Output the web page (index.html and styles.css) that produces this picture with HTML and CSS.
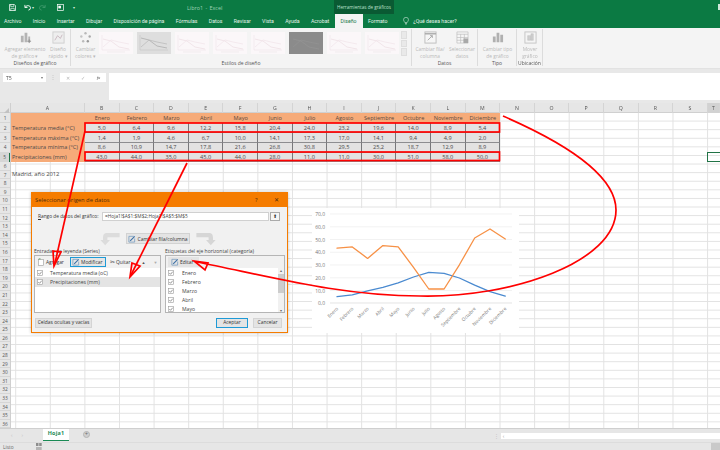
FILE: index.html
```html
<!DOCTYPE html>
<html lang="es">
<head>
<meta charset="utf-8">
<title>Libro1 - Excel</title>
<link rel="stylesheet" href="styles.css">
</head>
<body>
<svg class="defs" width="0" height="0" aria-hidden="true">
  <symbol id="thumb" viewBox="0 0 34 22">
    <path d="M3 3V18H31" fill="none" stroke="#eadfe4" stroke-width=".5"/>
    <path d="M4 7L12 9L20 15L30 17" fill="none" stroke="#eddce3" stroke-width=".7"/>
    <path d="M4 15L12 8L20 10L30 12" fill="none" stroke="#f0e4e9" stroke-width=".7"/>
    <path d="M8 20H26" stroke="#eee6ea" stroke-width=".7"/>
  </symbol>
  <symbol id="thumbg" viewBox="0 0 34 22">
    <path d="M3 3V18H31" fill="none" stroke="#bcbcbc" stroke-width=".5"/>
    <path d="M4 6L12 8L20 14L30 16" fill="none" stroke="#a8a8a8" stroke-width=".7"/>
    <path d="M4 15L12 8L20 10L30 12" fill="none" stroke="#b8b8b8" stroke-width=".7"/>
  </symbol>
  <symbol id="thumbd" viewBox="0 0 34 22">
    <path d="M4 7L12 9L20 15L30 17" fill="none" stroke="#959595" stroke-width=".7"/>
    <path d="M4 15L12 8L20 10L30 12" fill="none" stroke="#939393" stroke-width=".7"/>
  </symbol>
  <symbol id="pen" viewBox="0 0 9 9">
    <path d="M1 1.500H6.500M1 1.500V8H7.500V4" fill="none" stroke="#6d95bd" stroke-width=".8"/>
    <path d="M2.500 6.500L7.500 1.500" stroke="#3a6ea5" stroke-width="1.200"/>
  </symbol>
  <symbol id="chk" viewBox="0 0 7 7">
    <rect x=".5" y=".5" width="6" height="6" fill="#fff" stroke="#9a9a9a" stroke-width=".7"/>
    <path d="M1.500 3.500L3 5L5.500 2" fill="none" stroke="#666" stroke-width=".8"/>
  </symbol>
</svg>
<div class="page">
  <header class="titlebar">
    <div class="qat">
      <svg class="qat-ico" viewBox="0 0 8 8"><path d="M.5 .5H6L7.500 2V7.500H.5Z" fill="none" stroke="#fff" stroke-width=".9"/><path d="M2 .5V3H5.500V.5M2 7.500V5H6V7.500" fill="none" stroke="#fff" stroke-width=".7"/></svg>
      <svg class="qat-ico undo" viewBox="0 0 8 8"><path d="M1 1V4H4M1.500 4A3 2.600 0 1 1 5 7" fill="none" stroke="#fff" stroke-width="1"/></svg>
      <span class="qat-caret">▾</span>
      <svg class="qat-ico redo" viewBox="0 0 8 8"><path d="M7 1V4H4M6.500 4A3 2.600 0 1 0 3 7" fill="none" stroke="#3f9a6d" stroke-width="1"/></svg>
      <svg class="qat-ico form" viewBox="0 0 8 8"><rect x=".5" y=".5" width="7" height="7" fill="none" stroke="#fff" stroke-width=".8"/><rect x="1.500" y="2" width="3" height="3" fill="#fff"/></svg>
      <span class="qat-caret">▾</span>
    </div>
    <div class="doc-title">Libro1 - Excel</div>
    <div class="tool-tab">Herramientas de gráficos</div>
    <div class="win-btn"></div>
  </header>
  <nav class="tabs">
    <span class="tab">Archivo</span><span class="tab">Inicio</span><span class="tab">Insertar</span><span class="tab">Dibujar</span><span class="tab">Disposición de página</span><span class="tab">Fórmulas</span><span class="tab">Datos</span><span class="tab">Revisar</span><span class="tab">Vista</span><span class="tab">Ayuda</span><span class="tab">Acrobat</span><span class="tab tab-on">Diseño</span><span class="tab">Formato</span>
    <svg class="bulb" viewBox="0 0 6 8"><path d="M1.800 5.500C1.500 4.500 .5 4 .5 2.800A2.500 2.500 0 0 1 5.500 2.800C5.500 4 4.500 4.500 4.200 5.500ZM2 6.500H4M2.500 7.500H3.500" fill="none" stroke="#cfe8da" stroke-width=".6"/></svg>
    <span class="tell">¿Qué desea hacer?</span>
  </nav>
  <section class="ribbon">
    <div class="group g-design">
      <div class="cmds">
        <div class="cmd w-add"><svg class="ric" viewBox="0 0 14 14"><path d="M2 12V5H5V12ZM6 12V2H9V12ZM10 12V6H12V12Z" fill="#b4b4b4"/><path d="M11 9V13M9 11H13" stroke="#8f8f8f"/></svg><span>Agregar elemento<br>de gráfico ▾</span></div>
        <div class="cmd w-quick"><svg class="ric" viewBox="0 0 14 14"><rect x="1" y="1" width="12" height="12" fill="#eee" stroke="#cfcfcf"/><path d="M3 10L6 5L9 8L11 4" fill="none" stroke="#c9b8bf"/></svg><span>Diseño<br>rápido ▾</span></div>
      </div>
      <div class="glabel">Diseños de gráfico</div>
    </div>
    <div class="group g-style">
      <div class="cmds">
        <div class="cmd w-color"><svg class="ric" viewBox="0 0 14 14"><circle cx="7" cy="2.500" r="1.300" fill="#b9b9b9"/><circle cx="2.500" cy="6" r="1.300" fill="#c4c4c4"/><circle cx="11.500" cy="6" r="1.300" fill="#a9a9a9"/><circle cx="4.500" cy="11" r="1.300" fill="#bbb"/><circle cx="9.500" cy="11" r="1.300" fill="#999"/></svg><span>Cambiar<br>colores ▾</span></div>
        <div class="gallery">
          <svg class="thumb"><use href="#thumb"/></svg>
          <svg class="thumb t-grey"><use href="#thumbg"/></svg>
          <svg class="thumb"><use href="#thumb"/></svg>
          <svg class="thumb"><use href="#thumb"/></svg>
          <svg class="thumb"><use href="#thumb"/></svg>
          <svg class="thumb t-dark"><use href="#thumbd"/></svg>
          <svg class="thumb"><use href="#thumb"/></svg>
          <svg class="thumb"><use href="#thumb"/></svg>
          <div class="gal-scroll"><i></i><i></i><i></i></div>
        </div>
      </div>
      <div class="glabel">Estilos de diseño</div>
    </div>
    <div class="group g-data">
      <div class="cmds">
        <div class="cmd w-data"><svg class="ric" viewBox="0 0 14 14"><rect x="1" y="1" width="12" height="12" fill="#f6f6f6" stroke="#bdbdbd"/><path d="M1 3H13" stroke="#a9a9a9" stroke-width="1.500"/><path d="M4 10L9 5M9 5H6.500M9 5V7.500" fill="none" stroke="#a9a9a9"/></svg><span>Cambiar fila/<br>columna</span></div>
        <div class="cmd w-data"><svg class="ric" viewBox="0 0 14 14"><path d="M1 1H13V13H1ZM1 3.500H13M5 3.500V13M9 3.500V13M1 7H13M1 10H13" fill="#f6f6f6" stroke="#bdbdbd" stroke-width=".7"/><rect x="8" y="8" width="5" height="5" fill="#a9a9a9"/></svg><span>Seleccionar<br>datos</span></div>
      </div>
      <div class="glabel">Datos</div>
    </div>
    <div class="group g-type">
      <div class="cmds">
        <div class="cmd w-type"><svg class="ric" viewBox="0 0 14 14"><path d="M2 12V6H5V12ZM6 12V2H9V12ZM10 12V4H13V12Z" fill="#b0b0b0"/></svg><span>Cambiar tipo<br>de gráfico</span></div>
      </div>
      <div class="glabel">Tipo</div>
    </div>
    <div class="group g-move">
      <div class="cmds">
        <div class="cmd w-move"><svg class="ric" viewBox="0 0 14 14"><rect x="1" y="1" width="12" height="12" fill="#f4f4f4" stroke="#c4c4c4"/><path d="M4 10V5H7V10ZM7.500 10V3H10V10Z" fill="#cfcfcf" stroke="#b9b9b9" stroke-width=".5"/></svg><span>Mover<br>gráfico</span></div>
      </div>
      <div class="glabel">Ubicación</div>
    </div>
  </section>
  <section class="formula">
    <div class="namebox"><span>T5</span><span class="nb-caret">▾</span></div>
    <div class="f-dots">⋮</div>
    <div class="fx-box"><span>✕</span><span>✓</span><em>fx</em></div>
    <div class="f-input"></div>
  </section>
  <div class="colheads">
    <div class="corner"></div>
    <div class="ch">A</div><div class="ch">B</div><div class="ch">C</div><div class="ch">D</div><div class="ch">E</div><div class="ch">F</div><div class="ch">G</div><div class="ch">H</div><div class="ch">I</div><div class="ch">J</div><div class="ch">K</div><div class="ch">L</div><div class="ch">M</div><div class="ch">N</div><div class="ch">O</div><div class="ch">P</div><div class="ch">Q</div><div class="ch">R</div><div class="ch">S</div><div class="ch ch-on">T</div>
  </div>
  <div class="sheet">
    <div class="rownums">
      <div class="rn rn-t">1</div><div class="rn rn-t">2</div><div class="rn rn-t">3</div><div class="rn rn-s">4</div><div class="rn rn-s rn-on">5</div>
      <div class="rn">6</div><div class="rn">7</div><div class="rn">8</div><div class="rn">9</div><div class="rn">10</div><div class="rn">11</div><div class="rn">12</div><div class="rn">13</div><div class="rn">14</div><div class="rn">15</div><div class="rn">16</div><div class="rn">17</div><div class="rn">18</div><div class="rn">19</div><div class="rn">20</div><div class="rn">21</div><div class="rn">22</div><div class="rn">23</div><div class="rn">24</div><div class="rn">25</div><div class="rn">26</div><div class="rn">27</div><div class="rn">28</div><div class="rn">29</div><div class="rn">30</div><div class="rn">31</div><div class="rn">32</div><div class="rn">33</div><div class="rn">34</div><div class="rn">35</div><div class="rn">36</div>
    </div>
    <div class="cells">
      <div class="data">
        <div class="c lab r1"></div><div class="c head r1">Enero</div><div class="c head r1">Febrero</div><div class="c head r1">Marzo</div><div class="c head r1">Abril</div><div class="c head r1">Mayo</div><div class="c head r1">Junio</div><div class="c head r1">Julio</div><div class="c head r1">Agosto</div><div class="c head r1">Septiembre</div><div class="c head r1">Octubre</div><div class="c head r1">Noviembre</div><div class="c head r1">Diciembre</div>
        <div class="c lab r1">Temperatura media (°C)</div><div class="c num r1">5,0</div><div class="c num r1">6,4</div><div class="c num r1">9,6</div><div class="c num r1">12,2</div><div class="c num r1">15,8</div><div class="c num r1">20,4</div><div class="c num r1">24,0</div><div class="c num r1">23,2</div><div class="c num r1">19,6</div><div class="c num r1">14,0</div><div class="c num r1">8,9</div><div class="c num r1">5,4</div>
        <div class="c lab r1">Temperatura máxima (°C)</div><div class="c num r1">1,4</div><div class="c num r1">1,9</div><div class="c num r1">4,6</div><div class="c num r1">6,7</div><div class="c num r1">10,0</div><div class="c num r1">14,1</div><div class="c num r1">17,3</div><div class="c num r1">17,0</div><div class="c num r1">14,1</div><div class="c num r1">9,4</div><div class="c num r1">4,9</div><div class="c num r1">2,0</div>
        <div class="c lab r2">Temperatura mínima (°C)</div><div class="c num r2">8,6</div><div class="c num r2">10,9</div><div class="c num r2">14,7</div><div class="c num r2">17,8</div><div class="c num r2">21,6</div><div class="c num r2">26,8</div><div class="c num r2">30,8</div><div class="c num r2">29,5</div><div class="c num r2">25,2</div><div class="c num r2">18,7</div><div class="c num r2">12,9</div><div class="c num r2">8,9</div>
        <div class="c lab r2">Precipitaciones (mm)</div><div class="c num r2">43,0</div><div class="c num r2">44,0</div><div class="c num r2">35,0</div><div class="c num r2">45,0</div><div class="c num r2">44,0</div><div class="c num r2">28,0</div><div class="c num r2">11,0</div><div class="c num r2">11,0</div><div class="c num r2">30,0</div><div class="c num r2">51,0</div><div class="c num r2">58,0</div><div class="c num r2">50,0</div>
      </div>
      <div class="note">Madrid, año 2012</div>
      <div class="active-cell"></div>
    </div>
  </div>
  <footer class="sheetbar">
    <div class="nav-dots"><span>‹</span><span>›</span></div>
    <div class="sheet-tab">Hoja1</div>
    <div class="add-sheet">+</div>
    <div class="hs-wrap"><span class="hs-dots">⋮</span><span class="hs-left">‹</span><div class="hs-track"></div></div>
  </footer>
  <div class="statusbar">
    <span class="ready">Listo</span>
    <svg class="macro" viewBox="0 0 6 7"><rect x="0" y="0" width="2.500" height="3" fill="#8d8d8d"/><rect x="3.200" y="0" width="2.500" height="3" fill="#8d8d8d"/><rect x="0" y="4" width="5.700" height="3" fill="#b5b5b5"/></svg>
    <div class="sb-end"></div>
  </div>

  <aside class="chart">
    <svg class="chart-svg" viewBox="312 208 207 125">
      <g class="gl">
        <path d="M330 214H512M330 226.800H512M330 239.500H512M330 252.300H512M330 265H512M330 277.800H512M330 290.500H512"/>
        <path class="gl0" d="M330 303H512"/>
      </g>
      <g class="yl">
        <text x="325" y="216">70,0</text><text x="325" y="228.800">60,0</text><text x="325" y="241.500">50,0</text><text x="325" y="254.300">40,0</text><text x="325" y="267">30,0</text><text x="325" y="279.800">20,0</text><text x="325" y="292.500">10,0</text><text x="325" y="305">0,0</text>
      </g>
      <polyline class="s-blue" points="337,296.600 352.300,294.800 367.600,290.800 382.900,287.400 398.200,282.900 413.500,277 428.800,272.400 444.100,273.400 459.400,278 474.700,285.200 490,291.700 505.300,296.100"/>
      <polyline class="s-orange" points="337,248.200 352.300,246.900 367.600,258.400 382.900,245.600 398.200,246.900 413.500,267.300 428.800,289 444.100,289 459.400,264.800 474.700,238 490,229 505.300,239"/>
      <g class="xl">
        <text transform="translate(338.500 309) rotate(-45)">Enero</text>
        <text transform="translate(353.800 309) rotate(-45)">Febrero</text>
        <text transform="translate(369.100 309) rotate(-45)">Marzo</text>
        <text transform="translate(384.400 309) rotate(-45)">Abril</text>
        <text transform="translate(399.700 309) rotate(-45)">Mayo</text>
        <text transform="translate(415 309) rotate(-45)">Junio</text>
        <text transform="translate(430.300 309) rotate(-45)">Julio</text>
        <text transform="translate(445.600 309) rotate(-45)">Agosto</text>
        <text transform="translate(460.900 309) rotate(-45)">Septiembre</text>
        <text transform="translate(476.200 309) rotate(-45)">Octubre</text>
        <text transform="translate(491.500 309) rotate(-45)">Noviembre</text>
        <text transform="translate(506.800 309) rotate(-45)">Diciembre</text>
      </g>
    </svg>
  </aside>

  <div class="dialog">
    <div class="dlg-title"><span class="dlg-name">Seleccionar origen de datos</span><span class="dlg-q">?</span><span class="dlg-x">✕</span></div>
    <div class="dlg-body">
      <div class="range-row">
        <span class="range-label"><u>R</u>ango de datos del gráfico:</span>
        <div class="range-input">=Hoja1!$A$1:$M$2;Hoja1!$A$5:$M$5</div>
        <div class="range-btn">⬆</div>
      </div>
      <div class="switch-row">
        <svg class="sw-arrow" viewBox="0 0 24 16"><path d="M23 1H9C5 1 4 3 4 7V9H1L6.500 15L12 9H9V7C9 6 9.500 6 10 6H23Z" fill="#dcdcdc"/></svg>
        <div class="sw-btn"><svg class="pen"><use href="#pen"/></svg>Cambiar fila/columna</div>
        <svg class="sw-arrow" viewBox="0 0 24 16"><path d="M1 1H15C19 1 20 3 20 7V9H23L17.500 15L12 9H15V7C15 6 14.500 6 14 6H1Z" fill="#d6d6d6"/></svg>
      </div>
      <div class="panes">
        <div class="pane p-left">
          <div class="pane-title">Entradas de leyenda (Series)</div>
          <div class="pane-box">
            <div class="pane-tools">
              <div class="tb tb-add"><svg class="pen" viewBox="0 0 9 9"><rect x="1.500" y="1.500" width="6" height="7" fill="#fff" stroke="#9a9a9a" stroke-width=".7"/><path d="M2 1H4" stroke="#5a9a5a"/></svg>Agregar</div>
              <div class="tb tb-mod"><svg class="pen"><use href="#pen"/></svg>Modificar</div>
              <div class="tb tb-del"><span class="cross">✂</span>Quitar</div>
              <span class="updown">▲</span><span class="updown dim">▼</span>
            </div>
            <div class="li"><svg class="chk"><use href="#chk"/></svg>Temperatura media (oC)</div>
            <div class="li li-on"><svg class="chk"><use href="#chk"/></svg>Precipitaciones (mm)</div>
          </div>
        </div>
        <div class="pane p-right">
          <div class="pane-title">Etiquetas del eje horizontal (categoría)</div>
          <div class="pane-box">
            <div class="pane-tools"><div class="tb tb-edit"><svg class="pen"><use href="#pen"/></svg>Editar</div></div>
            <div class="cat-wrap">
              <div class="cats">
                <div class="li cat"><svg class="chk"><use href="#chk"/></svg>Enero</div>
                <div class="li cat"><svg class="chk"><use href="#chk"/></svg>Febrero</div>
                <div class="li cat"><svg class="chk"><use href="#chk"/></svg>Marzo</div>
                <div class="li cat"><svg class="chk"><use href="#chk"/></svg>Abril</div>
                <div class="li cat"><svg class="chk"><use href="#chk"/></svg>Mayo</div>
              </div>
              <div class="vscroll"><span>▴</span><i></i><span>▾</span></div>
            </div>
          </div>
        </div>
      </div>
      <div class="dlg-foot">
        <div class="btn btn-hidden">Celdas ocultas y vacías</div>
        <div class="foot-right"><div class="btn btn-ok">Aceptar</div><div class="btn btn-cancel">Cancelar</div></div>
      </div>
    </div>
  </div>

  <svg class="marks" viewBox="0 0 720 450">
    <rect x="85" y="123" width="414.500" height="9"/>
    <rect x="85" y="152" width="414.500" height="8.500"/>
    <path d="M503 116C572 146 616 178 616 210C616 262 512 298 420 296C340 296 268 276 197 262"/>
    <path d="M194 261L208 263L205 270Z"/>
    <path d="M85 131L55 263"/>
    <path d="M53 251L61 252L54 266Z"/>
    <path d="M187 163L131 275"/>
    <path d="M132 263L140 266L130 277Z"/>
  </svg>
</div>
</body>
</html>
```

FILE: styles.css
```css
* { box-sizing: border-box; }
html, body { margin: 0; padding: 0; background: #fff; }
body { font-family: "Open Sans", "Liberation Sans", sans-serif; font-size: 5.600px; color: #444; }
.defs { position: absolute; }
.page { position: relative; width: 720px; height: 450px; overflow: hidden; display: flex; flex-direction: column; filter: blur(.3px); }

.titlebar { height: 14px; background: #0b7a43; display: flex; align-items: center; flex: none; }
.qat { width: 334px; flex: none; display: flex; align-items: center; padding-left: 9px; position: relative; }
.qat-ico { width: 7px; height: 7px; flex: none; }
.undo { margin-left: 8px; }
.qat-caret { color: #d6eade; font-size: 4px; margin-left: 1px; }
.redo { margin-left: 5px; }
.form { margin-left: 11px; }
.qat .qat-caret:last-child { margin-left: 9px; }
.doc-title { position: absolute; left: 187px; top: 4px; color: #9fd4b7; font-size: 5.400px; word-spacing: 1px; }
.tool-tab { width: 60px; height: 14px; background: #0a5a33; color: #bfe0cd; font-size: 4.600px; line-height: 14px; padding-left: 3px; white-space: nowrap; overflow: hidden; flex: none; }
.win-btn { width: 2px; height: 6px; background: #cfe8da; margin-left: auto; flex: none; }

.tabs { height: 14px; background: #0b7a43; display: flex; align-items: center; padding-left: 4px; gap: 11.400px; flex: none; }
.tab { color: #e4f2ea; font-family: Roboto, sans-serif; font-size: 5.200px; white-space: nowrap; }
.tab-on { background: #f4f4f4; color: #1d7a4b; height: 14px; line-height: 14px; padding: 0 6px; margin: 0 -6px; }
.bulb { width: 6px; height: 8px; margin-left: 4px; flex: none; }
.tell { color: #e4f2ea; font-family: Roboto, sans-serif; font-size: 5.200px; margin-left: -7px; }

.ribbon { height: 41px; background: #f4f4f4; display: flex; flex: none; border-bottom: 1px solid #e2e2e2; }
.group { display: flex; flex-direction: column; border-right: 1px solid #dcdcdc; margin: 1px 0 2px; flex: none; }
.cmds { height: 30px; display: flex; flex: none; }
.glabel { text-align: center; font-size: 5px; color: #555; line-height: 8px; }
.cmd { display: flex; flex-direction: column; align-items: center; text-align: center; color: #b9b9b9; font-size: 4.900px; line-height: 7px; flex: none; padding-top: 2px; }
.ric { width: 13px; height: 13px; margin-bottom: 2px; flex: none; }
.g-design { width: 71px; }
.w-add { width: 44px; margin-left: 3px; }
.w-quick { width: 22px; }
.g-style { width: 341px; }
.w-color { width: 25px; margin-left: 2px; }
.gallery { display: flex; gap: 4px; padding: 3px 0 0 1px; flex: none; }
.thumb { width: 34px; height: 22px; background: #fbf7f9; flex: none; }
.t-grey { background: #dedede; }
.t-dark { background: #8b8b8b; }
.gal-scroll { width: 6px; height: 25px; display: flex; flex-direction: column; gap: 1px; margin: -1px 0 0 -2px; }
.gal-scroll i { display: block; flex: 1; background: #e9e9e9; border: 1px solid #dedede; }
.g-data { width: 66px; }
.w-data { width: 32px; }
.w-data:first-child { margin-left: 2px; }
.g-type { width: 39px; }
.w-type { width: 39px; }
.g-move { width: 26px; }
.w-move { width: 26px; }

.formula { height: 34px; background: #e8e8e8; display: flex; align-items: flex-start; padding: 4px 0 0 3px; flex: none; }
.namebox { width: 43px; height: 9px; background: #fff; display: flex; justify-content: space-between; align-items: center; padding: 0 3px; font-size: 5.200px; color: #555; flex: none; }
.nb-caret { font-size: 4px; color: #777; }
.f-dots { width: 14px; text-align: center; color: #c2c2c2; font-size: 6px; line-height: 9px; flex: none; }
.fx-box { width: 46px; height: 9px; background: #fff; display: flex; justify-content: space-around; align-items: center; color: #b5b5b5; font-size: 5px; flex: none; }
.fx-box em { color: #555; font-family: "Liberation Serif", serif; }
.f-input { width: 611px; height: 27px; background: #fff; margin-left: 3px; flex: none; }

.colheads { height: 10px; background: #e6e6e6; display: grid; grid-template-columns: 11px 74px repeat(18, 34.600px) 1fr; flex: none; border-bottom: 1px solid #d0d0d0; }
.corner { border-right: 1px solid #cfcfcf; position: relative; }
.corner::after { content: ""; position: absolute; right: 1px; bottom: 1px; border-style: solid; border-width: 0 0 5px 5px; border-color: transparent transparent #c2c2c2 transparent; }
.ch { text-align: center; font-size: 5.200px; line-height: 10px; color: #555; border-right: 1px solid #d4d4d4; }
.ch-on { background: #d2d2d2; border-bottom: 1px solid #217346; }

.sheet { height: 315px; display: flex; flex: none; overflow: hidden; }
.rownums { width: 11px; flex: none; background: #e6e6e6; border-right: 1px solid #cfcfcf; }
.rn { height: 8.600px; font-size: 4.800px; line-height: 8.600px; text-align: center; color: #555; box-shadow: inset 0 -1px 0 #d6d6d6; }
.rn-t { height: 10px; line-height: 10px; }
.rn-s { height: 9.500px; line-height: 9.500px; }
.rn-on { background: #d6d6d6; border-right: 1px solid #217346; }
.cells { position: relative; flex: 1; min-width: 0; background-color: #fff;
  background-image: linear-gradient(to right, #e2e2e2 1px, transparent 1px), linear-gradient(to bottom, #e2e2e2 1px, transparent 1px);
  background-size: 34.600px 8.600px; background-position: 73.400px 0, 0 7.600px; }
.data { display: grid; grid-template-columns: 74px repeat(12, 34.600px); width: 489.200px; }
.c { font-size: 5.600px; white-space: nowrap; color: #4a4a4a; overflow: hidden; }
.r1 { height: 10px; line-height: 10px; }
.r2 { height: 9.500px; line-height: 9.500px; }
.lab { background: #f6ab79; padding-left: 1px; }
.head { background: #f6ab79; text-align: center; color: #5a4a40; }
.num { background: #e3e2e2; text-align: center; border-right: 1px solid #77777a; border-bottom: 1px solid #8d8d90; }
.note { position: absolute; left: 1px; top: 57px; font-size: 5.800px; color: #4a4a4a; line-height: 8.600px; }
.active-cell { position: absolute; left: 696px; top: 39px; width: 20px; height: 10px; border: 1px solid #217346; }

.sheetbar { height: 14px; background: #e6e6e6; display: flex; align-items: flex-start; flex: none; border-top: 1px solid #cfcfcf; position: relative; }
.nav-dots { width: 43px; display: flex; gap: 9px; padding: 3px 0 0 11px; color: #c0c0c0; font-size: 5px; flex: none; }
.sheet-tab { width: 26px; height: 12px; background: #fff; color: #1a8a55; font-size: 5.400px; font-weight: 700; text-align: center; line-height: 9px; letter-spacing: .2px; border-bottom: 1px solid #1a8a55; flex: none; }
.add-sheet { width: 7px; height: 7px; border-radius: 50%; background: #cfcfcf; border: 1px solid #b5b5b5; color: #666; font-size: 5px; line-height: 5px; text-align: center; margin: 2px 0 0 14px; flex: none; }
.hs-wrap { position: absolute; left: 494px; top: 4px; right: 0; display: flex; align-items: center; gap: 3px; height: 6px; color: #9c9c9c; font-size: 5px; }
.hs-left { background: #fff; width: 5px; text-align: center; line-height: 6px; }
.hs-track { flex: 1; height: 6px; background: #fff; margin-left: -3px; }
.hs-dots { width: 4px; color: #c2c2c2; }

.statusbar { height: 9px; background: #e6e6e6; display: flex; align-items: center; padding-left: 3px; flex: none; border-top: 1px solid #dcdcdc; border-bottom: 1px solid #c9c5bd; position: relative; }
.ready { font-size: 4.800px; color: #666; }
.macro { width: 6px; height: 7px; margin-left: 22px; flex: none; }
.sb-end { position: absolute; right: 0; top: 0; width: 9px; height: 7px; background: #c9c9c9; }

.chart { position: absolute; left: 312px; top: 208px; width: 207px; height: 125px; background: #fff; }
.chart-svg { display: block; width: 207px; height: 125px; }
.gl path { stroke: #ececec; stroke-width: .7; fill: none; }
.gl .gl0 { stroke: #d8d8d8; }
.yl text { font-size: 5px; fill: #777; text-anchor: end; font-family: "Open Sans", sans-serif; }
.xl text { font-size: 4.700px; fill: #777; text-anchor: end; font-family: "Open Sans", sans-serif; }
.s-blue, .s-orange { fill: none; stroke-width: 1.300; stroke-linejoin: round; stroke-linecap: round; }
.s-blue { stroke: #4a8ad0; }
.s-orange { stroke: #f79146; }

.dialog { position: absolute; left: 31px; top: 192px; width: 257px; height: 141px; background: #f1f1f1; border: 1px solid #f57c00; box-shadow: 0 0 3px rgba(0,0,0,.25); display: flex; flex-direction: column; }
.dlg-title { height: 14px; background: #f57c00; display: flex; align-items: center; padding-left: 3px; flex: none; color: #4a2c10; }
.dlg-name { font-size: 5.800px; flex: 1; }
.dlg-q { font-size: 6px; width: 19px; }
.dlg-x { font-size: 6px; width: 13px; }
.dlg-body { flex: 1; display: flex; flex-direction: column; padding: 3px 3px 0 2px; min-height: 0; }
.range-row { height: 12px; display: flex; align-items: center; flex: none; padding-left: 4px; }
.range-label { width: 64px; font-size: 4.800px; white-space: nowrap; flex: none; color: #333; }
.range-input { width: 167px; height: 9px; background: #fff; border: 1px solid #d0d0d0; font-size: 4.800px; line-height: 7px; padding-left: 2px; white-space: nowrap; overflow: hidden; flex: none; }
.range-btn { width: 10px; height: 9px; border: 1px solid #aaa; background: #f5f5f5; font-size: 4.500px; line-height: 7px; text-align: center; margin-left: 1px; flex: none; color: #333; }
.switch-row { height: 15px; margin-top: 9px; display: flex; justify-content: center; align-items: center; gap: 4px; flex: none; padding-right: 2px; }
.sw-arrow { width: 24px; height: 14px; flex: none; }
.sw-btn { width: 64px; height: 11px; background: #e4e4e4; border: 1px solid #d2d2d2; font-size: 5px; display: flex; align-items: center; justify-content: center; gap: 1px; white-space: nowrap; color: #333; flex: none; }
.pen { width: 8px; height: 8px; flex: none; }
.panes { display: flex; gap: 4px; margin-top: 2px; flex: none; }
.pane { flex: none; }
.p-left { width: 127px; }
.p-right { width: 120px; }
.pane-title { height: 7px; line-height: 7px; font-size: 5px; color: #444; white-space: nowrap; }
.pane-box { height: 58px; background: #fff; border: 1px solid #b5b5b5; overflow: hidden; }
.pane-tools { height: 12px; background: #f1f1f1; display: flex; align-items: center; gap: 1px; padding-left: 1px; flex: none; }
.tb { height: 10px; display: flex; align-items: center; gap: 1px; font-size: 4.900px; color: #333; white-space: nowrap; padding: 0 1px; flex: none; }
.tb-add { width: 33px; }
.tb-mod { width: 36px; border: 1px solid #1e9ad6; background: #e6e6e6; }
.tb-del { width: 29px; margin-left: 2px; }
.tb-edit { width: 31px; background: #e4e4e4; margin-left: 1px; padding-left: 3px; }
.cross { font-size: 6px; }
.updown { font-size: 4px; color: #555; width: 13px; text-align: center; }
.updown.dim { color: #aaa; margin-left: 2px; }
.li { height: 9.300px; display: flex; align-items: center; font-size: 5.100px; color: #444; white-space: nowrap; padding-left: 2px; }
.chk { width: 6px; height: 6px; margin-right: 7px; flex: none; }
.li-on { background: #e4e4e4; }
.cat { height: 9.100px; }
.cat .chk { margin-right: 8px; }
.cat-wrap { display: flex; }
.cats { flex: 1; }
.vscroll { width: 6px; height: 45px; background: #f1f1f1; display: flex; flex-direction: column; align-items: center; justify-content: space-between; font-size: 4px; color: #666; flex: none; }
.vscroll i { display: block; width: 6px; height: 19px; background: #cdcdcd; margin-bottom: 14px; }
.vscroll span { line-height: 5px; }
.dlg-foot { display: flex; justify-content: space-between; margin-top: 5px; padding-left: 1px; flex: none; }
.foot-right { display: flex; gap: 5px; margin-right: 2px; }
.btn { height: 9.500px; font-size: 4.900px; line-height: 7.500px; text-align: center; background: #e4e4e4; border: 1px solid #d4d4d4; color: #333; white-space: nowrap; flex: none; }
.btn-hidden { width: 57px; }
.btn-ok { width: 32px; border-color: #1e9ad6; }
.btn-cancel { width: 29px; }

.marks { position: absolute; left: 0; top: 0; width: 720px; height: 450px; fill: none; stroke: #f00; stroke-width: 1.700; }
```
